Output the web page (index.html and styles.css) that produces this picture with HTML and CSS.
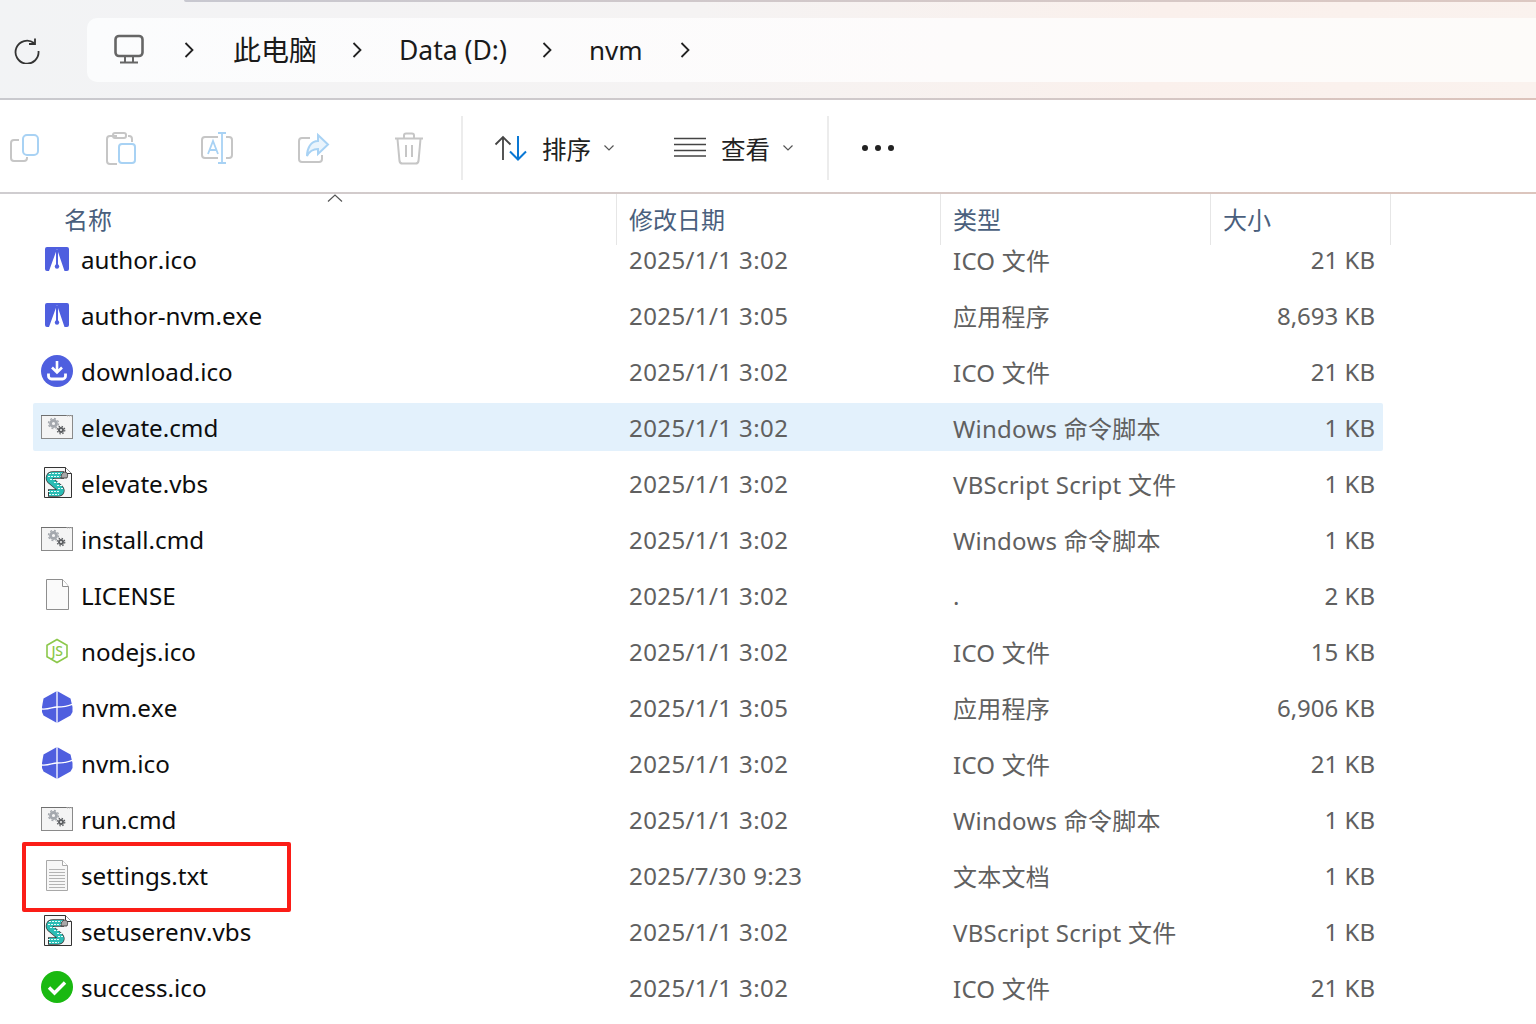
FILE: index.html
```html
<!DOCTYPE html>
<html lang="zh">
<head>
<meta charset="utf-8">
<title>nvm</title>
<link rel="stylesheet" href="styles.css">
</head>
<body>
<svg class="defs" width="0" height="0" aria-hidden="true">
  <symbol id="i-author" viewBox="0 0 32 32">
    <path d="M6 4h20a2 2 0 0 1 2 2v20a2 2 0 0 1-2 2h-2.500L16 6 8 28H6a2 2 0 0 1-2-2V6a2 2 0 0 1 2-2z" fill="#4f5fdf"/>
    <path d="M16 7v16" stroke="#4f5fdf" stroke-width="2"/>
    <circle cx="16" cy="23.500" r="2.200" fill="#4f5fdf"/>
  </symbol>
  <symbol id="i-download" viewBox="0 0 32 32">
    <circle cx="16" cy="16" r="16" fill="#4f5fdf"/>
    <path d="M16 6v11M11 12.500l5 5 5-5" fill="none" stroke="#fff" stroke-width="2.600"/>
    <path d="M7.500 18.500v2.500a3 3 0 0 0 3 3h11a3 3 0 0 0 3-3v-2.500" fill="none" stroke="#fff" stroke-width="2.800"/>
  </symbol>
  <symbol id="i-cmd" viewBox="0 0 32 32">
    <rect x="0.500" y="4.500" width="31" height="23" fill="#f4f4f4" stroke="#8a8a8a"/>
    <path d="M0 4.500h25" stroke="#6f6f6f"/>
    <path d="M26 5h5" stroke="#b5b5b5" stroke-dasharray="1 1"/>
    <circle cx="12.500" cy="12.500" r="3" fill="none" stroke="#a4a8ae" stroke-width="2.800"/>
    <circle cx="12.500" cy="12.500" r="5" fill="none" stroke="#a4a8ae" stroke-width="1.400" stroke-dasharray="2 1.900"/>
    <circle cx="20" cy="19" r="2" fill="none" stroke="#5d5f62" stroke-width="2"/>
    <circle cx="20" cy="19" r="3.800" fill="none" stroke="#5d5f62" stroke-width="1.200" stroke-dasharray="1.500 1.500"/>
  </symbol>
  <symbol id="i-vbs" viewBox="0 0 32 32">
    <path d="M3.500 0.500h21l6 6v24h-27z" fill="#f7f7f7" stroke="#333"/>
    <path d="M24.500 0.500v6h6" fill="#fff" stroke="#333"/>
    <path d="M23 8H12c-3.500 0-4.500 3-2.500 5.500l9 7.500c2.500 2.500 1.500 5-2 5H7" fill="none" stroke="#3a3a3a" stroke-width="7.400"/>
    <path d="M22 8H12c-3.500 0-4.500 3-2.500 5.500l9 7.500c2.500 2.500 1.500 5-2 5H8" fill="none" stroke="#2bbdb5" stroke-width="6"/>
    <path d="M8 6.500h13M7 9.500h14M9 12.500h5M13 15.500h6M16 18.500h6M17 21.500h5M7 24.500h12M8 27.500h10" stroke="#e8fcfb" stroke-width="1.200" stroke-dasharray="2 1"/>
    <path d="M20 11c0-3 1-6 4-6s3 4 2 6z" fill="#a8a8a8" stroke="#333" stroke-width="0.800"/>
  </symbol>
  <symbol id="i-blank" viewBox="0 0 32 32">
    <path d="M5.500 0.500h16l6 7v23h-22z" fill="#fafafa" stroke="#8e8e8e"/>
    <path d="M21.500 0.500v7h6" fill="#fff" stroke="#8e8e8e"/>
  </symbol>
  <symbol id="i-nvm" viewBox="0 0 32 32">
    <path d="M16 0l13.500 7.500 2 8.500v5l-2 3.500L16 32 2.500 24.500 1 21v-5l1.500-8.500z" fill="#4f5fdf"/>
    <path d="M0 18c8 1 11-2 16-2s9 0 16-3" fill="none" stroke="#fff" stroke-width="1.300"/>
    <path d="M16 0v32" stroke="#fff" stroke-width="1.300"/>
  </symbol>
  <symbol id="i-txt" viewBox="0 0 32 32">
    <path d="M5.500 1.500h16l5 5v25h-21z" fill="#f7f7f7" stroke="#a8a8a8"/>
    <path d="M21.500 1.500v5h5" fill="#fff" stroke="#a8a8a8"/>
    <path d="M8 10.500h16M8 13.500h16M8 16.500h16M8 19.500h16M8 22.500h16M8 25.500h16M8 28.500h16" stroke="#b4b4b4"/>
  </symbol>
  <symbol id="i-ok" viewBox="0 0 32 32">
    <circle cx="16" cy="16" r="16" fill="#1ab911"/>
    <path d="M8 16.500l5.500 5.500L24 11.500" fill="none" stroke="#fff" stroke-width="3.400"/>
  </symbol>
  <symbol id="i-chev" viewBox="0 0 12 18">
    <path d="M2.500 2l7 7-7 7" fill="none" stroke="#222" stroke-width="1.800"/>
  </symbol>
  <symbol id="i-caret" viewBox="0 0 12 8">
    <path d="M1.500 1.500l4.500 4.500 4.500-4.500" fill="none" stroke="#555" stroke-width="1.200"/>
  </symbol>
</svg>

<header class="nav">
  <div class="nav-edge"></div>
  <div class="nav-main">
    <svg class="refresh" width="26" height="26" viewBox="0 0 26 26"><path d="M20 5a11.500 11.500 0 1 0 4.500 8" fill="none" stroke="#333" stroke-width="1.800"/><path d="M21 0.500V6h-6" fill="none" stroke="#333" stroke-width="1.800"/></svg>
    <div class="crumbs">
      <svg class="monitor" width="32" height="30" viewBox="0 0 32 30"><rect x="2.500" y="2" width="27" height="20" rx="3.500" fill="none" stroke="#666" stroke-width="2.600"/><path d="M12 23v5M20 23v5M7 28.500h18" stroke="#666" stroke-width="2"/></svg>
      <svg class="chev c1"><use href="#i-chev"/></svg>
      <span class="crumb w1">此电脑</span>
      <svg class="chev c2"><use href="#i-chev"/></svg>
      <span class="crumb w2">Data (D:)</span>
      <svg class="chev c3"><use href="#i-chev"/></svg>
      <span class="crumb w3">nvm</span>
      <svg class="chev c4"><use href="#i-chev"/></svg>
    </div>
  </div>
  <div class="nav-rule"></div>
</header>

<section class="toolbar">
  <svg class="tool" viewBox="0 0 34 34"><path d="M11 9H6a3 3 0 0 0-3 3v15a3 3 0 0 0 3 3h10a3 3 0 0 0 3-3v-1" fill="none" stroke="#c6c6c6" stroke-width="2"/><rect x="15" y="4" width="15" height="20" rx="4" fill="none" stroke="#a8d2f4" stroke-width="2"/></svg>
  <svg class="tool" viewBox="0 0 34 34"><path d="M13 5H6a3 3 0 0 0-3 3v22a3 3 0 0 0 3 3h7M24 5h1a3 3 0 0 1 3 3v3" fill="none" stroke="#c6c6c6" stroke-width="2"/><rect x="9" y="2" width="13" height="5" rx="2" fill="none" stroke="#c6c6c6" stroke-width="2"/><rect x="15" y="13" width="16" height="19" rx="3" fill="none" stroke="#a8d2f4" stroke-width="2"/></svg>
  <svg class="tool" viewBox="0 0 34 34"><path d="M18 6H5a3 3 0 0 0-3 3v15a3 3 0 0 0 3 3h13M26 6h3a3 3 0 0 1 3 3v15a3 3 0 0 1-3 3h-3" fill="none" stroke="#c6c6c6" stroke-width="2"/><path d="M22 1v32M18 2h8M18 32h8M8 23l5-13 5 13M10 19h6" fill="none" stroke="#a8d2f4" stroke-width="1.800"/></svg>
  <svg class="tool" viewBox="0 0 34 34"><path d="M14 7H6a3 3 0 0 0-3 3v18a3 3 0 0 0 3 3h17a3 3 0 0 0 3-3v-4" fill="none" stroke="#c6c6c6" stroke-width="2"/><path d="M22 4l10 9.500L22 23v-5c-6 0-9 3-11 7 0-8 4-15 11-15z" fill="#eaf4fc" stroke="#a8d2f4" stroke-width="2"/></svg>
  <svg class="tool" viewBox="0 0 34 34"><path d="M3 7.500h28M12 7V4.500a2 2 0 0 1 2-2h6a2 2 0 0 1 2 2V7M5.500 8l2 22a3 3 0 0 0 3 2.500h13a3 3 0 0 0 3-2.500l2-22M14 14v12M20 14v12" fill="none" stroke="#c6c6c6" stroke-width="2"/></svg>
  <div class="tb-sep"></div>
  <svg class="sort" viewBox="0 0 34 26"><path d="M9 25V2M1.500 9.500L9 2l7.500 7.500" fill="none" stroke="#444" stroke-width="1.800"/><path d="M24 1v23M16 16.500l8 8 8-8" fill="none" stroke="#0a78d4" stroke-width="2"/></svg>
  <span class="tb-label">排序</span>
  <svg class="caret"><use href="#i-caret"/></svg>
  <svg class="view" viewBox="0 0 32 20"><path d="M0 1.500h32M0 7.500h32M0 13.500h32M0 19h32" stroke="#444" stroke-width="1.500"/></svg>
  <span class="tb-label">查看</span>
  <svg class="caret"><use href="#i-caret"/></svg>
  <div class="tb-sep sep-b"></div>
  <div class="dots"><i></i><i></i><i></i></div>
</section>

<main class="files">
  <div class="head">
    <div class="hc hc-name">名称<svg class="sort-mark" width="16" height="8" viewBox="0 0 16 8"><path d="M1 7.500l7-6.500 7 6.500" fill="none" stroke="#555" stroke-width="1.200"/></svg></div>
    <div class="hc hc-date">修改日期</div>
    <div class="hc hc-type">类型</div>
    <div class="hc hc-size">大小</div>
  </div>
  <div class="list">
    <div class="row"><div class="name"><svg class="ficon"><use href="#i-author"/></svg><span>author.ico</span></div><div class="date">2025/1/1 3:02</div><div class="type">ICO 文件</div><div class="size">21 KB</div></div>
    <div class="row"><div class="name"><svg class="ficon"><use href="#i-author"/></svg><span>author-nvm.exe</span></div><div class="date">2025/1/1 3:05</div><div class="type">应用程序</div><div class="size">8,693 KB</div></div>
    <div class="row"><div class="name"><svg class="ficon"><use href="#i-download"/></svg><span>download.ico</span></div><div class="date">2025/1/1 3:02</div><div class="type">ICO 文件</div><div class="size">21 KB</div></div>
    <div class="row selected"><div class="name"><svg class="ficon"><use href="#i-cmd"/></svg><span>elevate.cmd</span></div><div class="date">2025/1/1 3:02</div><div class="type">Windows 命令脚本</div><div class="size">1 KB</div></div>
    <div class="row"><div class="name"><svg class="ficon"><use href="#i-vbs"/></svg><span>elevate.vbs</span></div><div class="date">2025/1/1 3:02</div><div class="type">VBScript Script 文件</div><div class="size">1 KB</div></div>
    <div class="row"><div class="name"><svg class="ficon"><use href="#i-cmd"/></svg><span>install.cmd</span></div><div class="date">2025/1/1 3:02</div><div class="type">Windows 命令脚本</div><div class="size">1 KB</div></div>
    <div class="row"><div class="name"><svg class="ficon"><use href="#i-blank"/></svg><span>LICENSE</span></div><div class="date">2025/1/1 3:02</div><div class="type">.</div><div class="size">2 KB</div></div>
    <div class="row"><div class="name"><svg class="ficon" viewBox="0 0 32 32"><path d="M16 4.500l10 5.750v11.500L16 27.500 6 21.750v-11.500z" fill="#fff" stroke="#8cc84b" stroke-width="1.600"/><text x="16" y="21" class="js-mark">JS</text></svg><span>nodejs.ico</span></div><div class="date">2025/1/1 3:02</div><div class="type">ICO 文件</div><div class="size">15 KB</div></div>
    <div class="row"><div class="name"><svg class="ficon"><use href="#i-nvm"/></svg><span>nvm.exe</span></div><div class="date">2025/1/1 3:05</div><div class="type">应用程序</div><div class="size">6,906 KB</div></div>
    <div class="row"><div class="name"><svg class="ficon"><use href="#i-nvm"/></svg><span>nvm.ico</span></div><div class="date">2025/1/1 3:02</div><div class="type">ICO 文件</div><div class="size">21 KB</div></div>
    <div class="row"><div class="name"><svg class="ficon"><use href="#i-cmd"/></svg><span>run.cmd</span></div><div class="date">2025/1/1 3:02</div><div class="type">Windows 命令脚本</div><div class="size">1 KB</div></div>
    <div class="row"><div class="name"><svg class="ficon"><use href="#i-txt"/></svg><span>settings.txt</span></div><div class="date">2025/7/30 9:23</div><div class="type">文本文档</div><div class="size">1 KB</div></div>
    <div class="row"><div class="name"><svg class="ficon"><use href="#i-vbs"/></svg><span>setuserenv.vbs</span></div><div class="date">2025/1/1 3:02</div><div class="type">VBScript Script 文件</div><div class="size">1 KB</div></div>
    <div class="row"><div class="name"><svg class="ficon"><use href="#i-ok"/></svg><span>success.ico</span></div><div class="date">2025/1/1 3:02</div><div class="type">ICO 文件</div><div class="size">21 KB</div></div>
  </div>
  <div class="callout"></div>
</main>
</body>
</html>
```
FILE: styles.css
```css
* { box-sizing: border-box; }
html, body { margin: 0; height: 1024px; overflow: hidden; background: #fff; }
body { font-family: "Noto Sans", "Noto Sans CJK SC", sans-serif; color: #111; }
.defs { position: absolute; }

.nav { height: 100px; background: linear-gradient(100deg, #f2f3f5 0%, #f5f3f3 45%, #faf0ec 75%, #faf2ee 100%); display: flex; flex-direction: column; }
.nav-edge { height: 2px; margin-left: 184px; background: linear-gradient(90deg, #c8c8d0, #dcc8c2); border-bottom-left-radius: 2px; }
.nav-main { height: 96px; display: flex; align-items: flex-start; padding-top: 16px; }
.nav-rule { height: 2px; background: linear-gradient(90deg, #c9c9ce, #cfc9cb 55%, #dcc3bb); }
.refresh { margin: 20px 0 0 14px; flex: none; }
.crumbs { margin-left: 47px; flex: 1; height: 64px; border-radius: 10px 0 0 10px; background: linear-gradient(100deg, #fbfcfd, #fdfbfb 60%, #fdfbf9); display: flex; align-items: center; padding-left: 26px; font-size: 26.500px; color: #1a1a1a; }
.monitor { flex: none; margin-top: -3px; }
.chev { width: 12px; height: 18px; flex: none; }
.c1 { margin-left: 38px; }
.w1 { margin-left: 38px; font-size: 28px; }
.c2 { margin-left: 34px; }
.w2 { margin-left: 36px; }
.c3 { margin-left: 34px; }
.w3 { margin-left: 36px; font-size: 26px; }
.c4 { margin-left: 36px; }
.crumb { white-space: nowrap; line-height: 36px; }

.toolbar { height: 94px; border-bottom: 2px solid; border-image: linear-gradient(90deg, #cfcdd0, #dcc5bd) 1; display: flex; align-items: center; padding: 4px 0 0 8px; }
.tool { width: 34px; height: 34px; flex: none; margin-right: 62px; }
.tool:nth-of-type(5) { margin-right: 35px; }
.tb-sep { width: 2px; height: 64px; background: #ececec; flex: none; }
.sort { width: 34px; height: 26px; flex: none; margin-left: 31px; }
.tb-label { font-size: 24.500px; color: #222; margin-left: 14px; margin-top: 3px; line-height: 32px; white-space: nowrap; }
.caret { width: 12px; height: 8px; flex: none; margin-left: 12px; }
.view { width: 32px; height: 20px; flex: none; margin-left: 59px; margin-top: -2px; }
.view + .tb-label { margin-left: 15px; }
.sep-b { margin-left: 33px; }
.dots { display: flex; gap: 7px; margin-left: 33px; }
.dots i { width: 6px; height: 6px; border-radius: 50%; background: #222; display: block; }

.files { position: relative; height: 830px; }
.head { height: 51px; display: grid; grid-template-columns: 617px 324px 270px 180px; position: relative; z-index: 1; }
.hc { border-right: 1px solid #e6e6e6; font-size: 24px; color: #4a5f7d; padding: 8px 0 0 12px; line-height: 36px; position: relative; white-space: nowrap; }
.hc-name { padding-left: 64px; border-right-color: #fff; }
.hc-date { border-left: 1px solid #e6e6e6; margin-left: -1px; }
.sort-mark { position: absolute; left: 327px; top: 0; }
.list { margin-top: -14px; }
.row { height: 48px; margin: 4px 153px 4px 33px; display: grid; grid-template-columns: 596px 324px 270px 1fr; align-items: center; font-size: 24px; color: #606060; border-radius: 2px; white-space: nowrap; }
.row + .row { margin-top: 8px; }
.row.selected { background: #e3f1fc; }
.name { display: flex; align-items: center; gap: 8px; padding-left: 8px; color: #0d0d0d; font-size: 24.200px; font-kerning: none; }
.date { letter-spacing: 0.400px; }
.type { letter-spacing: 0.250px; }
.ficon { width: 32px; height: 32px; flex: none; }
.size { text-align: right; padding-right: 8px; }
.js-mark { font: 500 14px "Noto Sans", sans-serif; letter-spacing: -0.500px; fill: #8cc84b; text-anchor: middle; }
.callout { position: absolute; left: 22px; top: 648px; width: 269px; height: 70px; border: 4px solid #fb1d17; border-radius: 2px; }
```
